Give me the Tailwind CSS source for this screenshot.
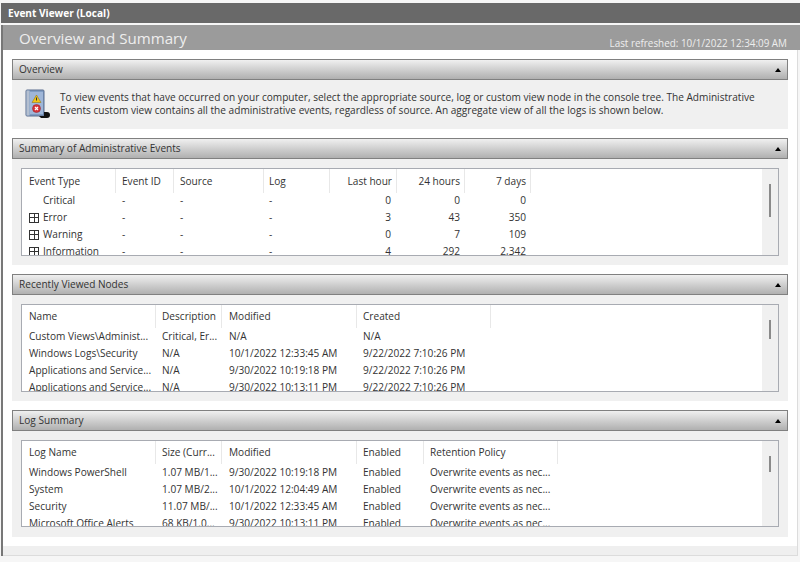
<!DOCTYPE html>
<html lang="en">
<head>
  <meta charset="UTF-8">
  <title>Event Viewer (Local)</title>
  <script src="https://cdn.jsdelivr.net/npm/@tailwindcss/browser@4"></script>
</head>
<body class="bg-[#f6f6f6] w-[800px] h-[562px] overflow-hidden font-['Open_Sans','Noto_Sans',sans-serif] text-[10.1px] text-[#333]">
  <div class="pt-[3px] pl-[1px]">
    <div class="h-[20px] bg-[#696969] text-white font-bold pl-[7px] leading-[20px]">Event Viewer (Local)</div>
    <div class="border-l-2 border-[#777] mt-[2px] h-[531px] flex flex-col">
      <div class="h-[25px] shrink-0 bg-[#9b9b9b] flex items-end justify-between pl-[16px] pr-[13px] text-[#eee]">
        <span class="text-[15.1px] leading-[26px] mb-[-1px]">Overview and Summary</span>
        <span class="text-[9.9px] leading-[14px]">Last refreshed: 10/1/2022 12:34:09 AM</span>
      </div>

      <div class="mr-[2px] flex-1 border-r border-b border-[#dcdcdc] bg-[#efefef]">
        <div class="bg-white h-[496px] pl-[9px] pr-[9px] pt-[9px] flex flex-col gap-[9px]">
          <section class="w-[776px]">
            <div class="h-[21px] border border-[#808080] bg-gradient-to-b from-[#f0f0f0] to-[#b0b0b0] flex items-center justify-between pl-[6px] pr-[5px]">
              <span>Overview</span>
              <span class="w-0 h-0 border-x-[3px] border-x-transparent border-b-[4px] border-b-black mr-[1px]"></span>
            </div>
            <div class="h-[49px] bg-[#f0f0f0] flex items-start pl-[13px] pt-[9px] gap-[10px]">
              <svg width="25" height="30" viewBox="0 0 25 30" class="shrink-0">
                <rect x="1" y="1" width="18" height="26" rx="1" fill="#7f9cc4" stroke="#5a6d8e"/>
                <rect x="1.500" y="1.500" width="3" height="25" fill="#b4bfd0"/>
                <rect x="5" y="3" width="13" height="22" fill="#9fb6d8"/>
                <path d="M11.500 6 16 13.500H7Z" fill="#f2c416" stroke="#8a6d10" stroke-width=".5"/>
                <rect x="11" y="8.500" width="1" height="3" fill="#333"/>
                <circle cx="11.500" cy="19.500" r="4" fill="#d8343a" stroke="#8d2328" stroke-width=".5"/>
                <path d="M10 18l3 3m0-3l-3 3" stroke="#fff" stroke-width="1.200"/>
                <path d="M19 23h3a3 3 0 0 1 3 3v0a3 3 0 0 1-3 3h-6l-2-2h5z" fill="#111"/>
              </svg>
              <p class="leading-[13px] mt-[2px] w-[710px]">To view events that have occurred on your computer, select the appropriate source, log or custom view node in the console tree. The Administrative Events custom view contains all the administrative events, regardless of source. An aggregate view of all the logs is shown below.</p>
            </div>
          </section>

          <section class="w-[776px]">
            <div class="h-[21px] border border-[#808080] bg-gradient-to-b from-[#f0f0f0] to-[#b0b0b0] flex items-center justify-between pl-[6px] pr-[5px]">
              <span>Summary of Administrative Events</span>
              <span class="w-0 h-0 border-x-[3px] border-x-transparent border-b-[4px] border-b-black mr-[1px]"></span>
            </div>
            <div class="h-[106px] bg-[#f0f0f0] pl-[9px] pr-[9px] pt-[9px]">
              <div class="relative h-[88px] bg-white border border-[#a8abb2] overflow-hidden">
                <div class="grid grid-cols-[93px_58px_90px_66px_67px_68px_66px] h-[23px] leading-[24px] pl-[1px]">
                  <div class="pl-[6px] border-r border-[#e8e8e8]">Event Type</div>
                  <div class="pl-[6px] border-r border-[#e8e8e8]">Event ID</div>
                  <div class="pl-[6px] border-r border-[#e8e8e8]">Source</div>
                  <div class="pl-[5px] border-r border-[#e8e8e8]">Log</div>
                  <div class="pr-[4px] text-right border-r border-[#e8e8e8]">Last hour</div>
                  <div class="pr-[4px] text-right border-r border-[#e8e8e8]">24 hours</div>
                  <div class="pr-[4px] text-right border-r border-[#e8e8e8]">7 days</div>
                </div>
                <div class="grid grid-cols-[93px_58px_90px_66px_67px_68px_66px] auto-rows-[17px] leading-[17px] pl-[1px]">
                  <div class="pl-[20px]">Critical</div><div class="pl-[6px]">-</div><div class="pl-[6px]">-</div><div class="pl-[5px]">-</div><div class="pr-[6px] text-right">0</div><div class="pr-[5px] text-right">0</div><div class="pr-[5px] text-right">0</div>
                  <div class="pl-[6px] flex items-center gap-[4px]"><span class="relative w-[10px] h-[10px] border border-[#333] shrink-0"><span class="absolute left-0 top-[3.500px] w-[8px] h-[1px] bg-[#333]"></span><span class="absolute left-[3.500px] top-0 w-[1px] h-[8px] bg-[#333]"></span></span>Error</div><div class="pl-[6px]">-</div><div class="pl-[6px]">-</div><div class="pl-[5px]">-</div><div class="pr-[6px] text-right">3</div><div class="pr-[5px] text-right">43</div><div class="pr-[5px] text-right">350</div>
                  <div class="pl-[6px] flex items-center gap-[4px]"><span class="relative w-[10px] h-[10px] border border-[#333] shrink-0"><span class="absolute left-0 top-[3.500px] w-[8px] h-[1px] bg-[#333]"></span><span class="absolute left-[3.500px] top-0 w-[1px] h-[8px] bg-[#333]"></span></span>Warning</div><div class="pl-[6px]">-</div><div class="pl-[6px]">-</div><div class="pl-[5px]">-</div><div class="pr-[6px] text-right">0</div><div class="pr-[5px] text-right">7</div><div class="pr-[5px] text-right">109</div>
                  <div class="pl-[6px] flex items-center gap-[4px]"><span class="relative w-[10px] h-[10px] border border-[#333] shrink-0"><span class="absolute left-0 top-[3.500px] w-[8px] h-[1px] bg-[#333]"></span><span class="absolute left-[3.500px] top-0 w-[1px] h-[8px] bg-[#333]"></span></span>Information</div><div class="pl-[6px]">-</div><div class="pl-[6px]">-</div><div class="pl-[5px]">-</div><div class="pr-[6px] text-right">4</div><div class="pr-[5px] text-right">292</div><div class="pr-[5px] text-right">2,342</div>
                </div>
                <div class="absolute right-0 top-0 bottom-0 w-[16px] bg-[#f0f0f0]"><div class="absolute left-[7px] top-[15px] w-[2px] h-[33px] bg-[#8a8a8a]"></div></div>
              </div>
            </div>
          </section>

          <section class="w-[776px]">
            <div class="h-[21px] border border-[#808080] bg-gradient-to-b from-[#f0f0f0] to-[#b0b0b0] flex items-center justify-between pl-[6px] pr-[5px]">
              <span>Recently Viewed Nodes</span>
              <span class="w-0 h-0 border-x-[3px] border-x-transparent border-b-[4px] border-b-black mr-[1px]"></span>
            </div>
            <div class="h-[106px] bg-[#f0f0f0] pl-[9px] pr-[9px] pt-[9px]">
              <div class="relative h-[88px] bg-white border border-[#a8abb2] overflow-hidden">
                <div class="grid grid-cols-[133px_66px_135px_134px] h-[23px] leading-[22px] pl-[1px]">
                  <div class="pl-[6px] border-r border-[#e8e8e8]">Name</div>
                  <div class="pl-[6px] border-r border-[#e8e8e8]">Description</div>
                  <div class="pl-[7px] border-r border-[#e8e8e8]">Modified</div>
                  <div class="pl-[6px] border-r border-[#e8e8e8]">Created</div>
                </div>
                <div class="grid grid-cols-[133px_66px_135px_134px] auto-rows-[17px] leading-[17px] pl-[1px] whitespace-nowrap">
                  <div class="pl-[6px]">Custom Views\Administ...</div><div class="pl-[6px]">Critical, Er...</div><div class="pl-[7px]">N/A</div><div class="pl-[6px]">N/A</div>
                  <div class="pl-[6px]">Windows Logs\Security</div><div class="pl-[6px]">N/A</div><div class="pl-[7px]">10/1/2022 12:33:45 AM</div><div class="pl-[6px]">9/22/2022 7:10:26 PM</div>
                  <div class="pl-[6px]">Applications and Service...</div><div class="pl-[6px]">N/A</div><div class="pl-[7px]">9/30/2022 10:19:18 PM</div><div class="pl-[6px]">9/22/2022 7:10:26 PM</div>
                  <div class="pl-[6px]">Applications and Service...</div><div class="pl-[6px]">N/A</div><div class="pl-[7px]">9/30/2022 10:13:11 PM</div><div class="pl-[6px]">9/22/2022 7:10:26 PM</div>
                </div>
                <div class="absolute right-0 top-0 bottom-0 w-[16px] bg-[#f0f0f0]"><div class="absolute left-[7px] top-[15px] w-[2px] h-[19px] bg-[#8a8a8a]"></div></div>
              </div>
            </div>
          </section>

          <section class="w-[776px]">
            <div class="h-[21px] border border-[#808080] bg-gradient-to-b from-[#f0f0f0] to-[#b0b0b0] flex items-center justify-between pl-[6px] pr-[5px]">
              <span>Log Summary</span>
              <span class="w-0 h-0 border-x-[3px] border-x-transparent border-b-[4px] border-b-black mr-[1px]"></span>
            </div>
            <div class="h-[106px] bg-[#f0f0f0] pl-[9px] pr-[9px] pt-[9px]">
              <div class="relative h-[87px] bg-white border border-[#a8abb2] overflow-hidden">
                <div class="grid grid-cols-[133px_66px_135px_67px_134px] h-[23px] leading-[22px] pl-[1px]">
                  <div class="pl-[6px] border-r border-[#e8e8e8]">Log Name</div>
                  <div class="pl-[6px] border-r border-[#e8e8e8]">Size (Curr...</div>
                  <div class="pl-[7px] border-r border-[#e8e8e8]">Modified</div>
                  <div class="pl-[6px] border-r border-[#e8e8e8]">Enabled</div>
                  <div class="pl-[6px] border-r border-[#e8e8e8]">Retention Policy</div>
                </div>
                <div class="grid grid-cols-[133px_66px_135px_67px_134px] auto-rows-[17px] leading-[17px] pl-[1px] whitespace-nowrap">
                  <div class="pl-[6px]">Windows PowerShell</div><div class="pl-[6px]">1.07 MB/1...</div><div class="pl-[7px]">9/30/2022 10:19:18 PM</div><div class="pl-[6px]">Enabled</div><div class="pl-[6px]">Overwrite events as nec...</div>
                  <div class="pl-[6px]">System</div><div class="pl-[6px]">1.07 MB/2...</div><div class="pl-[7px]">10/1/2022 12:04:49 AM</div><div class="pl-[6px]">Enabled</div><div class="pl-[6px]">Overwrite events as nec...</div>
                  <div class="pl-[6px]">Security</div><div class="pl-[6px]">11.07 MB/...</div><div class="pl-[7px]">10/1/2022 12:33:45 AM</div><div class="pl-[6px]">Enabled</div><div class="pl-[6px]">Overwrite events as nec...</div>
                  <div class="pl-[6px]">Microsoft Office Alerts</div><div class="pl-[6px]">68 KB/1.0...</div><div class="pl-[7px]">9/30/2022 10:13:11 PM</div><div class="pl-[6px]">Enabled</div><div class="pl-[6px]">Overwrite events as nec...</div>
                </div>
                <div class="absolute right-0 top-0 bottom-0 w-[16px] bg-[#f0f0f0]"><div class="absolute left-[7px] top-[15px] w-[2px] h-[16px] bg-[#8a8a8a]"></div></div>
              </div>
            </div>
          </section>
        </div>
      </div>
    </div>
  </div>
</body>
</html>
